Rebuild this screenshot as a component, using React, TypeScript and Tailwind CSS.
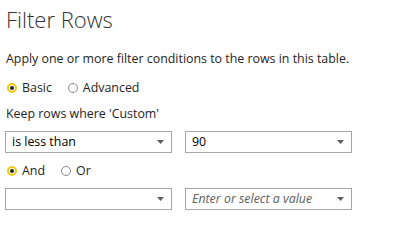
import React from 'react'

function Radio({ label, checked }: { label: string; checked?: boolean }) {
  return (
    <label className="flex items-center gap-[5px]">
      {checked ? (
        <span className="flex h-[10px] w-[10px] items-center justify-center rounded-full border-2 border-[#f2c811] bg-white">
          <span className="h-[4px] w-[4px] rounded-full bg-[#252423]"></span>
        </span>
      ) : (
        <span className="h-[10px] w-[10px] rounded-full border border-[#8a8886] bg-white"></span>
      )}
      <span>{label}</span>
    </label>
  )
}

function Caret() {
  return (
    <svg width="7" height="4" viewBox="0 0 7 4" className="shrink-0">
      <path d="M0 0h7L3.5 4z" fill="#605e5c" />
    </svg>
  )
}

function Dropdown({ value, placeholder }: { value?: string; placeholder?: string }) {
  return (
    <div className="flex h-[22px] w-[167px] items-center justify-between border border-[#a6a6a6] bg-white pl-[6px] pr-[7px]">
      {value ? (
        <span className="text-[#000000]">{value}</span>
      ) : placeholder ? (
        <span className="italic text-[#605e5c]">{placeholder}</span>
      ) : (
        <span></span>
      )}
      <Caret />
    </div>
  )
}

export default function App() {
  return (
    <div
      className="h-[225px] w-[406px] overflow-hidden bg-white pl-[5px] text-[12.4px] text-[#252423]"
      style={{ fontFamily: '"Open Sans", "Noto Sans", sans-serif' }}
    >
      <h1 className="pl-px pt-[4px] text-[22px] font-light leading-[30px] text-[#333333]">Filter Rows</h1>
      <p className="mt-[16px] pl-px leading-[18px]">Apply one or more filter conditions to the rows in this table.</p>

      <div className="mt-[11px] flex gap-[16px] pl-[2px] leading-[18px]">
        <Radio label="Basic" checked />
        <Radio label="Advanced" />
      </div>

      <p className="mt-[8px] pl-px leading-[18px]">Keep rows where 'Custom'</p>

      <div className="mt-[8px] flex gap-[13px]">
        <Dropdown value="is less than" />
        <Dropdown value="90" />
      </div>

      <div className="mt-[9px] flex gap-[16px] pl-[2px] leading-[18px]">
        <Radio label="And" checked />
        <Radio label="Or" />
      </div>

      <div className="mt-[8px] flex gap-[13px]">
        <Dropdown />
        <Dropdown placeholder="Enter or select a value" />
      </div>
    </div>
  )
}
